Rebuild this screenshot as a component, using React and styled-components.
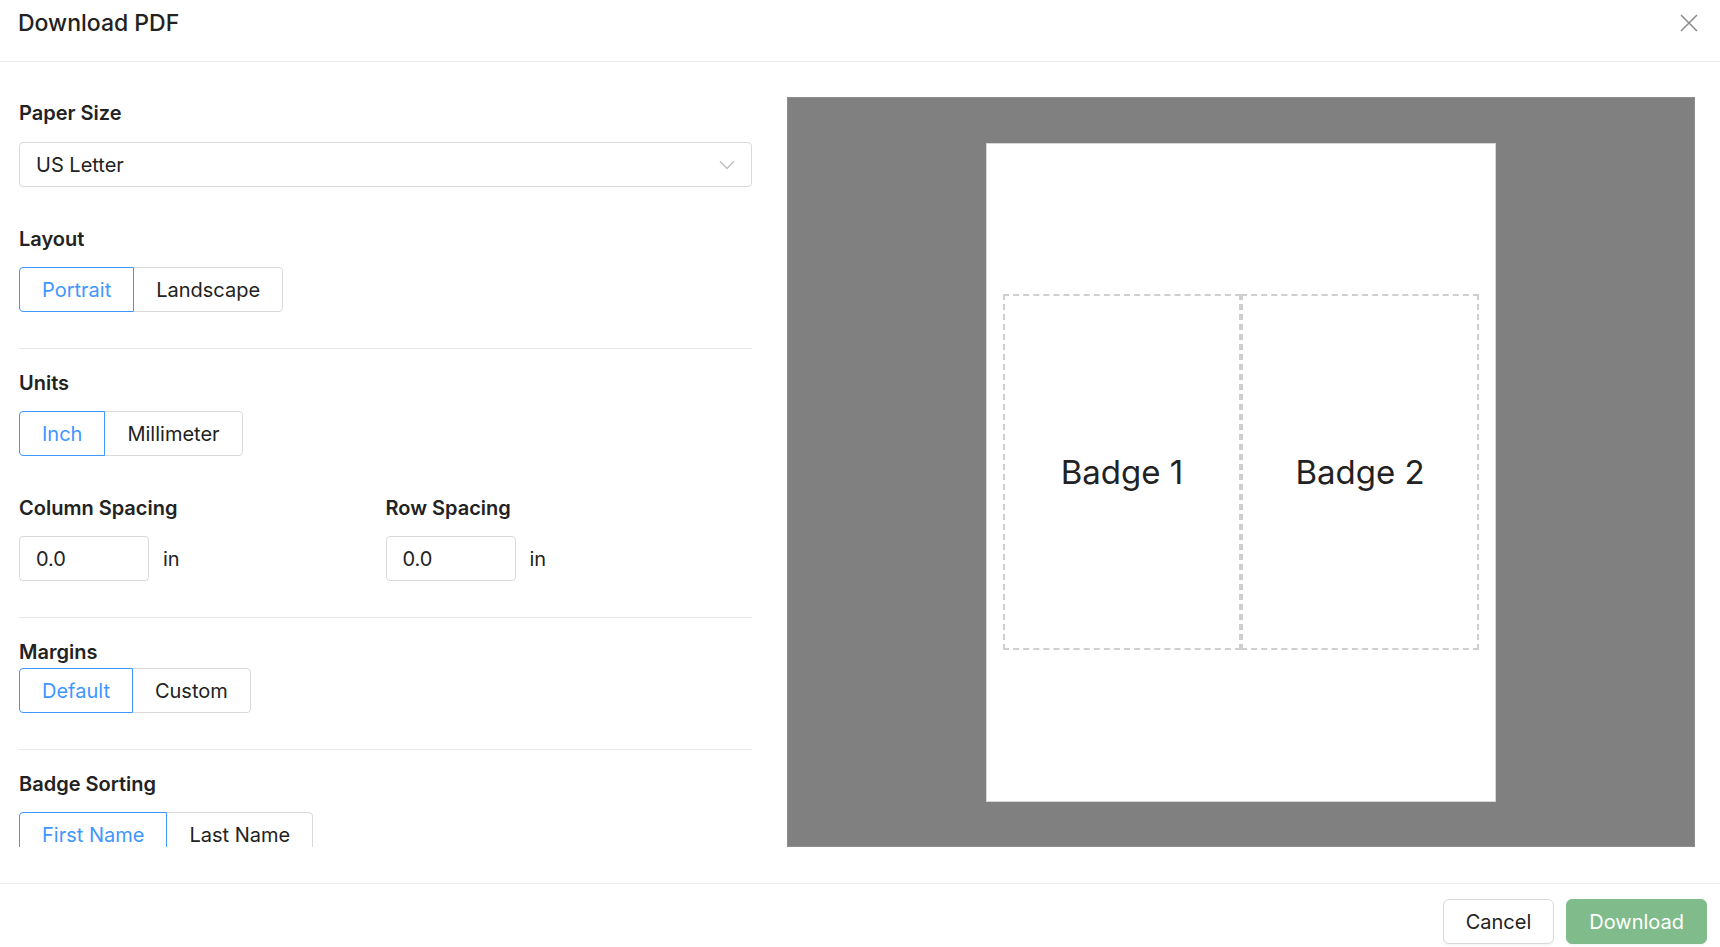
import React from "react";
import styled, { createGlobalStyle } from "styled-components";

const GlobalStyle = createGlobalStyle`
  html, body { margin: 0; padding: 0; background: #fff; }
  body { font-family: Inter, "Noto Sans", "Liberation Sans", sans-serif; color: #222; }
  * { box-sizing: border-box; }
`;

const Modal = styled.div`
  width: 1720px;
  height: 947px;
  overflow: hidden;
  display: flex;
  flex-direction: column;
  background: #fff;
`;

const Header = styled.header`
  flex: 0 0 auto;
  height: 62px;
  display: flex;
  align-items: flex-start;
  justify-content: space-between;
  padding: 8px 22px 0 18px;
  border-bottom: 1px solid #ececec;
`;

const Title = styled.h1`
  margin: 0;
  font-size: 23px;
  line-height: 30px;
  font-weight: 500;
  color: #222;
`;

const CloseButton = styled.button`
  border: 0;
  background: transparent;
  padding: 0;
  margin-top: 6px;
  width: 18px;
  height: 18px;
  display: flex;
  cursor: pointer;
`;

const Body = styled.div`
  flex: 0 0 auto;
  height: 821px;
  display: flex;
  gap: 35px;
  padding: 35px 25px 36px 19px;
`;

const Settings = styled.div`
  width: 733px;
  flex: 0 0 auto;
  overflow: hidden;
  padding-top: 2px;
  display: flex;
  flex-direction: column;
`;

const Field = styled.div`
  display: flex;
  flex-direction: column;
  align-items: flex-start;
  margin-top: ${(p) => p.$mt || 0}px;
`;

const Label = styled.div`
  font-size: 20px;
  line-height: 28px;
  font-weight: 600;
  color: #222;
  padding-left: 0px;
  margin-bottom: ${(p) => (p.$mb != null ? p.$mb : 14)}px;
`;

const Select = styled.div`
  width: 100%;
  height: 45px;
  border: 1px solid #d9d9d9;
  border-radius: 4px;
  display: flex;
  align-items: center;
  justify-content: space-between;
  padding: 0 16px 0 16px;
  font-size: 20px;
  color: #222;
`;

const Segmented = styled.div`
  display: flex;
`;

const SegButton = styled.button`
  position: relative;
  height: 45px;
  padding: 0 22px;
  font-family: inherit;
  font-size: 20px;
  background: #fff;
  cursor: pointer;
  border: 1px solid ${(p) => (p.$active ? "#4096ff" : "#d9d9d9")};
  color: ${(p) => (p.$active ? "#4096ff" : "#222")};
  z-index: ${(p) => (p.$active ? 1 : 0)};
  margin-left: -1px;
  &:first-child {
    margin-left: 0;
    border-radius: 4px 0 0 4px;
  }
  &:last-child {
    border-radius: 0 4px 4px 0;
  }
`;

const Divider = styled.hr`
  border: 0;
  border-top: 1px solid #e8e8e8;
  margin: 36px 0 0 0;
  width: 100%;
  height: 0;
`;

const TwoCols = styled.div`
  display: grid;
  grid-template-columns: 1fr 1fr;
  margin-top: 38px;
`;

const InputRow = styled.div`
  display: flex;
  align-items: center;
  gap: 14px;
`;

const NumberInput = styled.input`
  width: 130px;
  height: 45px;
  border: 1px solid #d9d9d9;
  border-radius: 4px;
  padding: 0 16px;
  font-family: inherit;
  font-size: 20px;
  color: #222;
  outline: none;
`;

const Unit = styled.span`
  font-size: 20px;
  color: #222;
`;

const Preview = styled.div`
  flex: 1 1 auto;
  background: #808080;
  border: 1px solid #8e8e8e;
  display: flex;
  align-items: center;
  justify-content: center;
`;

const Paper = styled.div`
  width: 508px;
  height: 657px;
  background: #fff;
  box-shadow: 0 0 0 1px #d6d6d6;
  display: flex;
  align-items: center;
  justify-content: center;
`;

const BadgeGrid = styled.div`
  display: flex;
`;

const Badge = styled.div`
  width: 238px;
  height: 356px;
  border: 2px dashed #cfcfcf;
  display: flex;
  align-items: center;
  justify-content: center;
  font-size: 33px;
  color: #222;
`;

const Footer = styled.footer`
  flex: 0 0 auto;
  border-top: 1px solid #ececec;
  display: flex;
  justify-content: flex-end;
  gap: 12px;
  padding: 15px 13px 15px 0;
`;

const Button = styled.button`
  height: 45px;
  padding: 0 22px;
  font-family: inherit;
  font-size: 20px;
  border-radius: 6px;
  cursor: pointer;
  border: 1px solid ${(p) => (p.$primary ? "#80bb8b" : "#d9d9d9")};
  background: ${(p) => (p.$primary ? "#80bb8b" : "#fff")};
  color: ${(p) => (p.$primary ? "#fff" : "#222")};
  box-shadow: 0 2px 0 rgba(0, 0, 0, 0.03);
`;

const CloseIcon = () => (
  <svg width="18" height="18" viewBox="0 0 18 18">
    <path d="M1 1 L17 17 M17 1 L1 17" stroke="#8c8c8c" strokeWidth="1.6" fill="none" />
  </svg>
);

const Chevron = () => (
  <svg width="16" height="10" viewBox="0 0 16 10">
    <polyline points="1,1.5 8,8.5 15,1.5" stroke="#bfbfbf" strokeWidth="1.4" fill="none" />
  </svg>
);

const Seg = ({ options, active }) => (
  <Segmented>
    {options.map((o) => (
      <SegButton key={o} $active={o === active}>
        {o}
      </SegButton>
    ))}
  </Segmented>
);

export default function App() {
  return (
    <>
      <GlobalStyle />
      <Modal>
        <Header>
          <Title>Download PDF</Title>
          <CloseButton aria-label="Close">
            <CloseIcon />
          </CloseButton>
        </Header>
        <Body>
          <Settings>
            <Field>
              <Label $mb={15}>Paper Size</Label>
              <Select>
                <span>US Letter</span>
                <Chevron />
              </Select>
            </Field>
            <Field $mt={38}>
              <Label>Layout</Label>
              <Seg options={["Portrait", "Landscape"]} active="Portrait" />
            </Field>
            <Divider />
            <Field $mt={20}>
              <Label>Units</Label>
              <Seg options={["Inch", "Millimeter"]} active="Inch" />
            </Field>
            <TwoCols>
              <Field>
                <Label>Column Spacing</Label>
                <InputRow>
                  <NumberInput defaultValue="0.0" />
                  <Unit>in</Unit>
                </InputRow>
              </Field>
              <Field>
                <Label>Row Spacing</Label>
                <InputRow>
                  <NumberInput defaultValue="0.0" />
                  <Unit>in</Unit>
                </InputRow>
              </Field>
            </TwoCols>
            <Divider />
            <Field $mt={20}>
              <Label $mb={2}>Margins</Label>
              <Seg options={["Default", "Custom"]} active="Default" />
            </Field>
            <Divider />
            <Field $mt={20}>
              <Label>Badge Sorting</Label>
              <Seg options={["First Name", "Last Name"]} active="First Name" />
            </Field>
          </Settings>
          <Preview>
            <Paper>
              <BadgeGrid>
                <Badge>Badge 1</Badge>
                <Badge>Badge 2</Badge>
              </BadgeGrid>
            </Paper>
          </Preview>
        </Body>
        <Footer>
          <Button>Cancel</Button>
          <Button $primary>Download</Button>
        </Footer>
      </Modal>
    </>
  );
}
